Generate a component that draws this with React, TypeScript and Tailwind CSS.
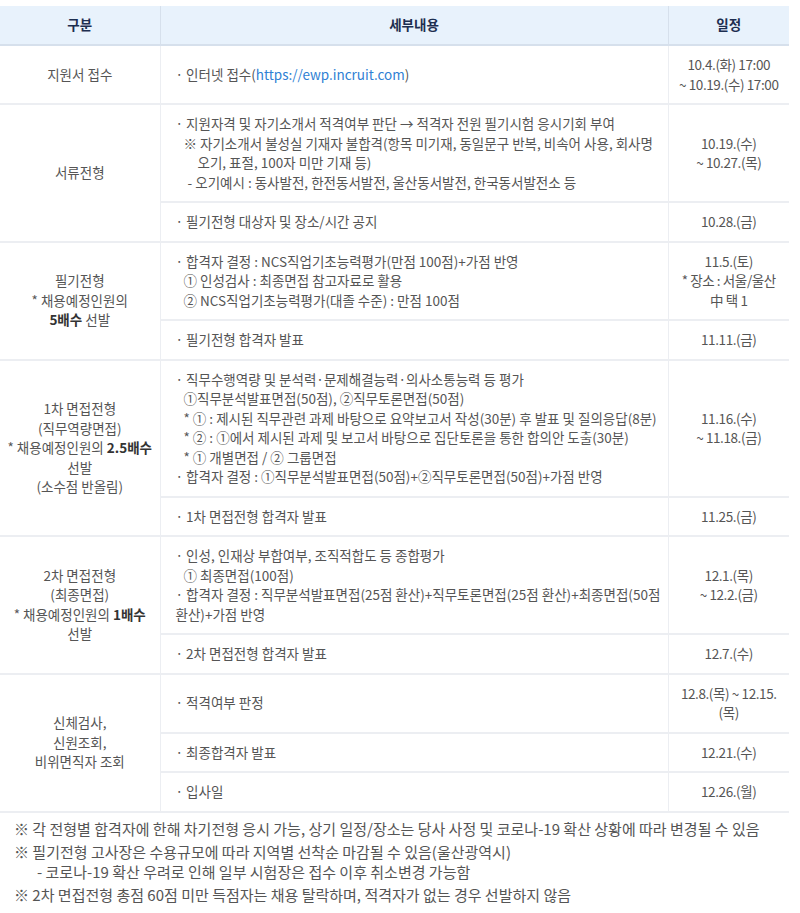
const cell = "border-b-2 border-[#eceef2] align-middle";
const vline = "border-r border-[#e2e5ea]";

function Sched({ children }: { children: React.ReactNode }) {
  return (
    <td className={`${cell} text-center px-1 py-[9px] whitespace-nowrap tracking-[-0.4px]`}>{children}</td>
  );
}

function Detail({ children }: { children: React.ReactNode }) {
  return <td className={`${cell} ${vline} pl-[15px] pr-1 py-[9px] whitespace-nowrap`}>{children}</td>;
}

function Stage({ rows, children }: { rows: number; children: React.ReactNode }) {
  return (
    <td rowSpan={rows} className={`${cell} ${vline} text-center px-1 py-[9px] whitespace-nowrap`}>
      {children}
    </td>
  );
}

export default function App() {
  return (
    <div className="w-[800px] bg-white pt-[6px] font-['Noto_Sans_CJK_KR','Noto_Sans',sans-serif] text-[#555]">
      <table className="w-[789px] table-fixed border-collapse text-[13.5px] leading-[19.5px]">
        <thead>
          <tr className="bg-[#e8f2fc] text-[13.5px] font-bold text-[#1d2e50]">
            <th className="w-[160px] h-[39px] border-b-2 border-r border-[#d6e0ec] font-bold">구분</th>
            <th className="border-b-2 border-r border-[#d6e0ec] font-bold">세부내용</th>
            <th className="w-[121px] border-b-2 border-[#d6e0ec] font-bold">일정</th>
          </tr>
        </thead>
        <tbody>
          <tr>
            <Stage rows={1}>지원서 접수</Stage>
            <Detail>
              · 인터넷 접수(<span className="text-[#2f7fd4]">https://ewp.incruit.com</span>)
            </Detail>
            <Sched>
              10.4.(화) 17:00
              <br />~ 10.19.(수) 17:00
            </Sched>
          </tr>

          <tr>
            <Stage rows={2}>서류전형</Stage>
            <Detail>
              <p>· 지원자격 및 자기소개서 적격여부 판단 → 적격자 전원 필기시험 응시기회 부여</p>
              <p className="pl-2">※ 자기소개서 불성실 기재자 불합격(항목 미기재, 동일문구 반복, 비속어 사용, 회사명</p>
              <p className="pl-[22px]">오기, 표절, 100자 미만 기재 등)</p>
              <p className="pl-3">- 오기예시 : 동사발전, 한전동서발전, 울산동서발전, 한국동서발전소 등</p>
            </Detail>
            <Sched>
              10.19.(수)
              <br />~ 10.27.(목)
            </Sched>
          </tr>
          <tr>
            <Detail>· 필기전형 대상자 및 장소/시간 공지</Detail>
            <Sched>10.28.(금)</Sched>
          </tr>

          <tr>
            <Stage rows={2}>
              필기전형
              <br />* 채용예정인원의
              <br />
              <b className="text-[#333]">5배수</b> 선발
            </Stage>
            <Detail>
              <p>· 합격자 결정 : NCS직업기초능력평가(만점 100점)+가점 반영</p>
              <p className="pl-2">① 인성검사 : 최종면접 참고자료로 활용</p>
              <p className="pl-2">② NCS직업기초능력평가(대졸 수준) : 만점 100점</p>
            </Detail>
            <Sched>
              11.5.(토)
              <br />* 장소 : 서울/울산
              <br />中 택 1
            </Sched>
          </tr>
          <tr>
            <Detail>· 필기전형 합격자 발표</Detail>
            <Sched>11.11.(금)</Sched>
          </tr>

          <tr>
            <Stage rows={2}>
              1차 면접전형
              <br />(직무역량면접)
              <br />* 채용예정인원의 <b className="text-[#333]">2.5배수</b>
              <br />선발
              <br />(소수점 반올림)
            </Stage>
            <Detail>
              <p>· 직무수행역량 및 분석력·문제해결능력·의사소통능력 등 평가</p>
              <p className="pl-2">①직무분석발표면접(50점), ②직무토론면접(50점)</p>
              <p className="pl-2">* ① : 제시된 직무관련 과제 바탕으로 요약보고서 작성(30분) 후 발표 및 질의응답(8분)</p>
              <p className="pl-2">* ② : ①에서 제시된 과제 및 보고서 바탕으로 집단토론을 통한 합의안 도출(30분)</p>
              <p className="pl-2">* ① 개별면접 / ② 그룹면접</p>
              <p>· 합격자 결정 : ①직무분석발표면접(50점)+②직무토론면접(50점)+가점 반영</p>
            </Detail>
            <Sched>
              11.16.(수)
              <br />~ 11.18.(금)
            </Sched>
          </tr>
          <tr>
            <Detail>· 1차 면접전형 합격자 발표</Detail>
            <Sched>11.25.(금)</Sched>
          </tr>

          <tr>
            <Stage rows={2}>
              2차 면접전형
              <br />(최종면접)
              <br />* 채용예정인원의 <b className="text-[#333]">1배수</b>
              <br />선발
            </Stage>
            <Detail>
              <p>· 인성, 인재상 부합여부, 조직적합도 등 종합평가</p>
              <p className="pl-2">① 최종면접(100점)</p>
              <p>
                · 합격자 결정 : 직무분석발표면접(25점 환산)+직무토론면접(25점 환산)+최종면접(50점
                <br />
                환산)+가점 반영
              </p>
            </Detail>
            <Sched>
              12.1.(목)
              <br />~ 12.2.(금)
            </Sched>
          </tr>
          <tr>
            <Detail>· 2차 면접전형 합격자 발표</Detail>
            <Sched>12.7.(수)</Sched>
          </tr>

          <tr>
            <Stage rows={3}>
              신체검사,
              <br />신원조회,
              <br />비위면직자 조회
            </Stage>
            <Detail>· 적격여부 판정</Detail>
            <Sched>
              12.8.(목) ~ 12.15.
              <br />(목)
            </Sched>
          </tr>
          <tr>
            <Detail>· 최종합격자 발표</Detail>
            <Sched>12.21.(수)</Sched>
          </tr>
          <tr>
            <Detail>· 입사일</Detail>
            <Sched>12.26.(월)</Sched>
          </tr>
        </tbody>
      </table>

      <div className="pl-[14px] pt-[4px] pb-3 text-[15px] leading-[20px] whitespace-nowrap">
        <p className="mt-[2px]">※ 각 전형별 합격자에 한해 차기전형 응시 가능, 상기 일정/장소는 당사 사정 및 코로나-19 확산 상황에 따라 변경될 수 있음</p>
        <p className="mt-[3px]">※ 필기전형 고사장은 수용규모에 따라 지역별 선착순 마감될 수 있음(울산광역시)</p>
        <p className="pl-[23px]">- 코로나-19 확산 우려로 인해 일부 시험장은 접수 이후 취소변경 가능함</p>
        <p className="mt-[3px]">※ 2차 면접전형 총점 60점 미만 득점자는 채용 탈락하며, 적격자가 없는 경우 선발하지 않음</p>
      </div>
    </div>
  );
}
